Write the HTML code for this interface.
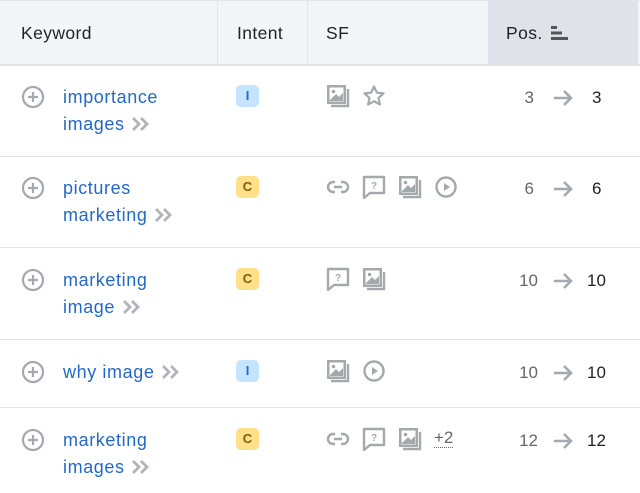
<!DOCTYPE html><html><head><style>
body{margin:0;width:640px;height:493px;overflow:hidden;background:#fff;font-family:"Liberation Sans",sans-serif;position:relative}
.a{position:absolute}
.hd{top:1px;height:63px;background:#f4f5f9;border-bottom:2px solid #e4e5ea}
.ht{font-size:17.5px;color:#222;top:23px;letter-spacing:0.4px}
.vl{top:1px;height:63px;width:1px;background:#e4e5ea}
.rl{left:0;width:640px;height:1px;background:#e4e5ea}
.kw{font-size:18px;color:#2468c8;line-height:27px;letter-spacing:0.6px}
.bd{width:23px;height:22px;border-radius:5px;font-size:13px;font-weight:bold;text-align:center;line-height:22px}
.bi{background:#c5e4ff;color:#2468c8}
.bc{background:#ffe08a;color:#8a5a00}
.n{font-size:17px;color:#666;text-align:right;width:40px}
.n2{font-size:17px;color:#222}
</style></head><body>
<div class="a hd" style="left:0;width:640px"></div>
<div class="a" style="left:488px;top:1px;width:150px;height:63px;background:#e1e2e9"></div>
<div class="a" style="left:0;top:0;width:640px;height:1px;background:#e4e5ea"></div>
<div class="a vl" style="left:217px"></div>
<div class="a vl" style="left:307px"></div>
<div class="a ht" style="left:21px">Keyword</div>
<div class="a ht" style="left:237px">Intent</div>
<div class="a ht" style="left:326px">SF</div>
<div class="a ht" style="left:506px">Pos.</div>
<svg class="a" style="left:550px;top:25px" width="20" height="16"><rect x="1" y="1" width="6" height="3" fill="#555"/><rect x="1" y="6.5" width="11" height="3" fill="#555"/><rect x="1" y="12" width="17" height="3" fill="#555"/></svg>

<div class="a rl" style="top:156px"></div>
<div class="a rl" style="top:247px"></div>
<div class="a rl" style="top:339px"></div>
<div class="a rl" style="top:407px"></div>

<svg width="0" height="0" style="position:absolute">
<defs>
<symbol id="plus" viewBox="0 0 24 24"><circle cx="12" cy="12" r="10" fill="none" stroke="#a4a8b0" stroke-width="2.2"/><path d="M12 7v10M7 12h10" stroke="#a4a8b0" stroke-width="2.2"/></symbol>
<symbol id="chev" viewBox="0 0 20 16"><path d="M3 2l6 6-6 6M11 2l6 6-6 6" fill="none" stroke="#b0b4ba" stroke-width="2.8"/></symbol>
<symbol id="img" viewBox="0 0 24 24"><path d="M1 1h19v19H1z" fill="#a4aaac"/><path d="M3.5 3.5h14v14h-14z" fill="#fff"/><path d="M4 16l6-6 3 3 4-4v8H4z" fill="#a4aaac"/><circle cx="7.5" cy="7.5" r="1.8" fill="#a4aaac"/><path d="M22 5v17H5" fill="none" stroke="#a4aaac" stroke-width="2.4"/></symbol>
<symbol id="star" viewBox="0 0 24 24"><path d="M12 2.5l2.9 6.2 6.6.7-5 4.5 1.4 6.6L12 17.2l-5.9 3.3 1.4-6.6-5-4.5 6.6-.7z" fill="none" stroke="#a4aaac" stroke-width="2.2" stroke-linejoin="round"/></symbol>
<symbol id="link" viewBox="0 0 24 24"><path d="M9 7H7a5 5 0 000 10h2M15 7h2a5 5 0 010 10h-2M8 12h8" fill="none" stroke="#a4aaac" stroke-width="2.4"/></symbol>
<symbol id="faq" viewBox="0 0 24 24"><path d="M2 2h20v16H8l-6 5z" fill="none" stroke="#a4aaac" stroke-width="2.4" stroke-linejoin="round"/><text x="12" y="14" font-size="10" font-weight="bold" text-anchor="middle" fill="#a4aaac" font-family="Liberation Sans">?</text></symbol>
<symbol id="play" viewBox="0 0 24 24"><circle cx="12" cy="12" r="9.5" fill="none" stroke="#a4aaac" stroke-width="2.4"/><path d="M10 8l6 4-6 4z" fill="#a4aaac"/></symbol>
<symbol id="arr" viewBox="0 0 24 24"><path d="M3 12h17M13 5l7 7-7 7" fill="none" stroke="#a4a8b0" stroke-width="2.6"/></symbol>
</defs></svg>

<!-- row 1 -->
<svg class="a" style="left:21px;top:85px" width="24" height="24"><use href="#plus"/></svg>
<div class="a kw" style="left:63px;top:84px">importance<br>images <svg width="20" height="16" style="vertical-align:-2px"><use href="#chev"/></svg></div>
<div class="a bd bi" style="left:236px;top:85px">I</div>
<svg class="a" style="left:326px;top:84px" width="24" height="24"><use href="#img"/></svg>
<svg class="a" style="left:362px;top:84px" width="24" height="24"><use href="#star"/></svg>
<div class="a n" style="left:494px;top:88px">3</div>
<svg class="a" style="left:551px;top:86px" width="24" height="24"><use href="#arr"/></svg>
<div class="a n2" style="left:592px;top:88px">3</div>

<!-- row 2 -->
<svg class="a" style="left:21px;top:176px" width="24" height="24"><use href="#plus"/></svg>
<div class="a kw" style="left:63px;top:175px">pictures<br>marketing <svg width="20" height="16" style="vertical-align:-2px"><use href="#chev"/></svg></div>
<div class="a bd bc" style="left:236px;top:176px">C</div>
<svg class="a" style="left:326px;top:175px" width="24" height="24"><use href="#link"/></svg>
<svg class="a" style="left:362px;top:175px" width="24" height="24"><use href="#faq"/></svg>
<svg class="a" style="left:398px;top:175px" width="24" height="24"><use href="#img"/></svg>
<svg class="a" style="left:434px;top:175px" width="24" height="24"><use href="#play"/></svg>
<div class="a n" style="left:494px;top:179px">6</div>
<svg class="a" style="left:551px;top:177px" width="24" height="24"><use href="#arr"/></svg>
<div class="a n2" style="left:592px;top:179px">6</div>

<!-- row 3 -->
<svg class="a" style="left:21px;top:268px" width="24" height="24"><use href="#plus"/></svg>
<div class="a kw" style="left:63px;top:267px">marketing<br>image <svg width="20" height="16" style="vertical-align:-2px"><use href="#chev"/></svg></div>
<div class="a bd bc" style="left:236px;top:268px">C</div>
<svg class="a" style="left:326px;top:267px" width="24" height="24"><use href="#faq"/></svg>
<svg class="a" style="left:362px;top:267px" width="24" height="24"><use href="#img"/></svg>
<div class="a n" style="left:498px;top:271px">10</div>
<svg class="a" style="left:551px;top:269px" width="24" height="24"><use href="#arr"/></svg>
<div class="a n2" style="left:587px;top:271px">10</div>

<!-- row 4 -->
<svg class="a" style="left:21px;top:360px" width="24" height="24"><use href="#plus"/></svg>
<div class="a kw" style="left:63px;top:359px">why image <svg width="20" height="16" style="vertical-align:-2px"><use href="#chev"/></svg></div>
<div class="a bd bi" style="left:236px;top:360px">I</div>
<svg class="a" style="left:326px;top:359px" width="24" height="24"><use href="#img"/></svg>
<svg class="a" style="left:362px;top:359px" width="24" height="24"><use href="#play"/></svg>
<div class="a n" style="left:498px;top:363px">10</div>
<svg class="a" style="left:551px;top:361px" width="24" height="24"><use href="#arr"/></svg>
<div class="a n2" style="left:587px;top:363px">10</div>

<!-- row 5 -->
<svg class="a" style="left:21px;top:428px" width="24" height="24"><use href="#plus"/></svg>
<div class="a kw" style="left:63px;top:427px">marketing<br>images <svg width="20" height="16" style="vertical-align:-2px"><use href="#chev"/></svg></div>
<div class="a bd bc" style="left:236px;top:428px">C</div>
<svg class="a" style="left:326px;top:427px" width="24" height="24"><use href="#link"/></svg>
<svg class="a" style="left:362px;top:427px" width="24" height="24"><use href="#faq"/></svg>
<svg class="a" style="left:398px;top:427px" width="24" height="24"><use href="#img"/></svg>
<div class="a" style="left:434px;top:428px;font-size:17px;color:#666;border-bottom:1px dotted #666;line-height:19px">+2</div>
<div class="a n" style="left:498px;top:431px">12</div>
<svg class="a" style="left:551px;top:429px" width="24" height="24"><use href="#arr"/></svg>
<div class="a n2" style="left:587px;top:431px">12</div>
</body></html>
